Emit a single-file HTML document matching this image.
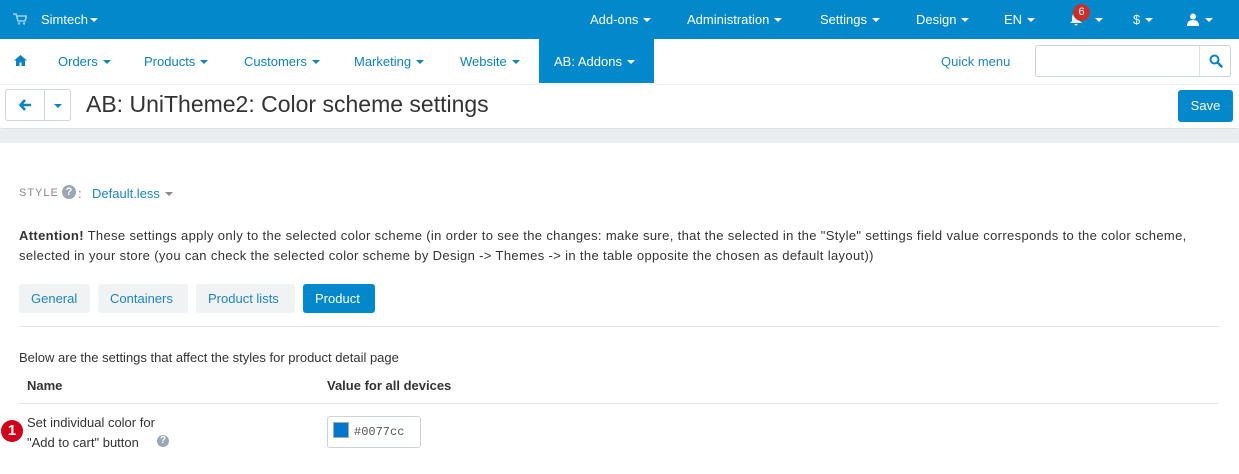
<!DOCTYPE html>
<html><head><meta charset="utf-8"><style>
*{margin:0;padding:0;box-sizing:border-box}
body{width:1239px;height:474px;overflow:hidden;background:#fff;font-family:"Liberation Sans",sans-serif;font-size:13px;color:#333;position:relative}
.a{position:absolute;white-space:nowrap}
.top{position:absolute;left:0;top:0;width:1239px;height:39px;background:#0388cc}
.top .a{color:#fff;top:12px;font-size:13px}
.car{display:inline-block;width:0;height:0;border-left:4px solid transparent;border-right:4px solid transparent;border-top:4px solid currentColor;vertical-align:middle;margin-left:5px;margin-top:-2px}
.nav .a{color:#0a82c4;top:54px}
.tab{position:absolute;top:284px;height:29px;border-radius:3px;background:#f1f2f3;color:#1a86c8;padding:0 12px;line-height:29px}
</style></head><body>
<div class="top">
<svg class="a" style="left:13px;top:13px" width="14" height="12" viewBox="0 0 14 12"><path d="M0 1h3l2 7h7l1.5-5H4" fill="none" stroke="#9cd0ee" stroke-width="1.6"/><circle cx="6" cy="10.5" r="1.2" fill="#9cd0ee"/><circle cx="11" cy="10.5" r="1.2" fill="#9cd0ee"/></svg>
<span class="a" style="left:41px">Simtech<span class="car" style="margin-left:2px"></span></span>
<span class="a" style="left:590px">Add-ons<span class="car"></span></span>
<span class="a" style="left:687px">Administration<span class="car"></span></span>
<span class="a" style="left:820px">Settings<span class="car"></span></span>
<span class="a" style="left:916px">Design<span class="car"></span></span>
<span class="a" style="left:1004px">EN<span class="car"></span></span>
<svg class="a" style="left:1069px;top:12px" width="14" height="14" viewBox="0 0 14 14"><path d="M7 1c-3 0-4 2.5-4 5v3l-2 2h12l-2-2V6c0-2.5-1-5-4-5zM5.5 12a1.5 1.5 0 003 0z" fill="#e4f1fa"/></svg>
<span class="a" style="left:1090px;top:12px"><span class="car"></span></span>
<span class="a" style="left:1073px;top:4px;width:17px;height:17px;border-radius:50%;background:#c9302c;color:#fff;font-size:11px;text-align:center;line-height:17px">6</span>
<span class="a" style="left:1133px">$<span class="car"></span></span>
<svg class="a" style="left:1187px;top:13px" width="12" height="13" viewBox="0 0 12 13"><circle cx="6" cy="3.5" r="3" fill="#fff"/><path d="M0 13c0-4 2-6 6-6s6 2 6 6z" fill="#fff"/></svg>
<span class="a" style="left:1200px"><span class="car"></span></span>
</div>
<div class="nav">
<svg class="a" style="left:14px;top:55px" width="13" height="11" viewBox="0 0 13 11"><path d="M6.5 0L0 5.5h2V11h3.5V7.5h2V11H11V5.5h2z" fill="#0a82c4"/></svg>
<span class="a" style="left:58px">Orders<span class="car"></span></span>
<span class="a" style="left:144px">Products<span class="car"></span></span>
<span class="a" style="left:244px">Customers<span class="car"></span></span>
<span class="a" style="left:354px">Marketing<span class="car"></span></span>
<span class="a" style="left:460px">Website<span class="car"></span></span>
<div class="a" style="left:539px;top:39px;width:115px;height:44px;background:#0388cc"></div>
<span class="a" style="left:554px;color:#fff">AB: Addons<span class="car"></span></span>
<span class="a" style="left:941px;color:#1a86c8">Quick menu</span>
<div class="a" style="left:1035px;top:45px;width:196px;height:32px;border:1px solid #ccd3d9;border-radius:3px"></div>
<div class="a" style="left:1199px;top:46px;width:1px;height:30px;background:#dde2e6"></div>
<svg class="a" style="left:1209px;top:54px" width="14" height="14" viewBox="0 0 14 14"><circle cx="5.5" cy="5.5" r="4" fill="none" stroke="#0a82c4" stroke-width="2"/><path d="M8.5 8.5L12.5 12.5" stroke="#0a82c4" stroke-width="2.4" stroke-linecap="round"/></svg>
</div>
<div class="a" style="left:0;top:84px;width:1239px;height:44px;background:#fff;border-top:1px solid #eef0f2;box-shadow:0 2px 3px rgba(0,0,0,.15)"></div>
<div class="a" style="left:0;top:129px;width:1239px;height:14px;background:#ebeef1"></div>
<div class="a" style="left:5px;top:89px;width:66px;height:32px;border:1px solid #cfd6dc;border-radius:3px;background:#fff"></div>
<div class="a" style="left:44px;top:90px;width:1px;height:30px;background:#cfd6dc"></div>
<svg class="a" style="left:19px;top:99px" width="13" height="12" viewBox="0 0 13 12"><path d="M6 1L1.5 6 6 11M2 6h10" fill="none" stroke="#0a82c4" stroke-width="2.6" stroke-linejoin="round"/></svg>
<span class="a" style="left:54px;top:97px;color:#0a82c4"><span class="car" style="margin:0"></span></span>
<span class="a" style="left:86px;top:91px;font-size:23px;color:#333">AB: UniTheme2: Color scheme settings</span>
<div class="a" style="left:1178px;top:90px;width:55px;height:32px;background:#0388cc;border-radius:3px;color:#fff;text-align:center;line-height:32px">Save</div>
<span class="a" style="left:19px;top:187px;font-size:11px;color:#888;letter-spacing:1px">STYLE</span>
<span class="a" style="left:62px;top:185px;width:14px;height:14px;border-radius:50%;background:#9aa8b6;color:#fff;font-size:11px;font-weight:bold;text-align:center;line-height:14px">?</span>
<span class="a" style="left:78px;top:186px;color:#888">:</span>
<span class="a" style="left:92px;top:186px;color:#1a86c8">Default.less<span class="car" style="color:#888"></span></span>
<div class="a" style="left:19px;top:226px;line-height:20px;width:1175px;white-space:normal;letter-spacing:0.35px"><b>Attention!</b> These settings apply only to the selected color scheme (in order to see the changes: make sure, that the selected in the "Style" settings field value corresponds to the color scheme, selected in your store (you can check the selected color scheme by Design -&gt; Themes -&gt; in the table opposite the chosen as default layout))</div>
<div class="tab" style="left:19px;width:71px">General</div>
<div class="tab" style="left:98px;width:90px">Containers</div>
<div class="tab" style="left:196px;width:99px">Product lists</div>
<div class="tab" style="left:303px;width:72px;background:#0388cc;color:#fff">Product</div>
<div class="a" style="left:19px;top:326px;width:1200px;height:1px;background:#e3e6e9"></div>
<span class="a" style="left:19px;top:350px">Below are the settings that affect the styles for product detail page</span>
<span class="a" style="left:27px;top:378px;font-weight:bold">Name</span>
<span class="a" style="left:327px;top:378px;font-weight:bold">Value for all devices</span>
<div class="a" style="left:19px;top:403px;width:1200px;height:1px;background:#e3e6e9"></div>
<span class="a" style="left:27px;top:415px">Set individual color for</span>
<span class="a" style="left:27px;top:435px">"Add to cart" button</span>
<span class="a" style="left:157px;top:435px;width:12px;height:12px;border-radius:50%;background:#9aa8b6;color:#fff;font-size:10px;font-weight:bold;text-align:center;line-height:12px">?</span>
<span class="a" style="left:1px;top:420px;width:22px;height:22px;border-radius:50%;background:#d0021b;color:#fff;font-size:15px;font-weight:bold;text-align:center;line-height:22px">1</span>
<div class="a" style="left:327px;top:416px;width:94px;height:32px;border:1px solid #ccd3d9;border-radius:3px"></div>
<div class="a" style="left:333px;top:422px;width:16px;height:16px;background:#0077cc;border:1px solid #aaa"></div>
<span class="a" style="left:354px;top:425px;font-family:'Liberation Mono',monospace;font-size:12px;color:#555">#0077cc</span>
</body></html>
